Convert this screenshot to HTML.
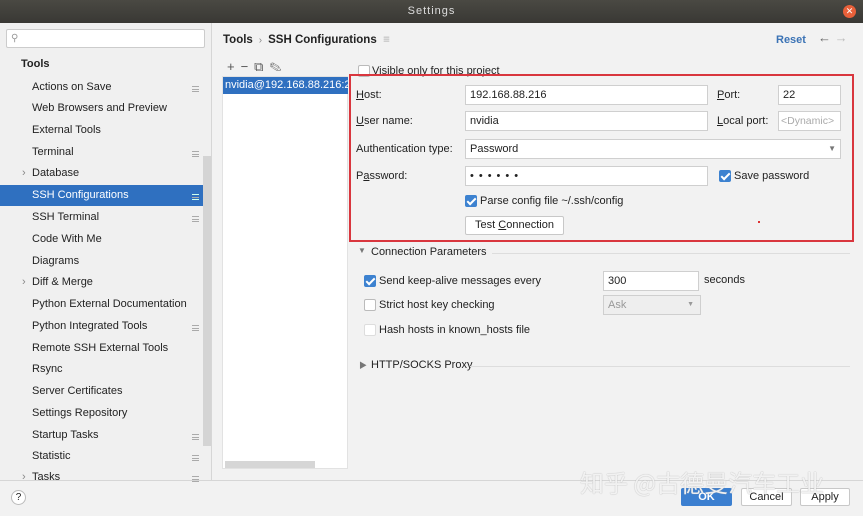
<!DOCTYPE html>
<html><head><style>
*{margin:0;padding:0;box-sizing:border-box}
body{width:863px;height:516px;overflow:hidden;background:#f2f2f2;font-family:"Liberation Sans","Noto Sans CJK SC",sans-serif;font-size:11px;color:#222;position:relative}
.a{position:absolute;white-space:nowrap}
.title{left:0;top:0;width:863px;height:23px;background:linear-gradient(#4a4943,#393834);color:#ddd;text-align:center;line-height:23px;font-size:11px;letter-spacing:1px}
.side{left:0;top:23px;width:212px;height:457px;background:#f0f0f0;border-right:1px solid #d6d6d6}
.it{position:absolute;left:32px;font-size:11px;color:#222}
.mk{position:absolute;left:192px;width:7px;height:6px;border-top:1px solid #aaa;border-bottom:1px solid #aaa}
.mk:after{content:"";position:absolute;left:0;top:2px;width:7px;height:1px;background:#aaa}
.inp{position:absolute;background:#fff;border:1px solid #cfcfcf;height:20px;line-height:18px;padding-left:4px;font-size:11px}
.lbl{position:absolute;font-size:11px}
.cb{position:absolute;width:12px;height:12px;border:1px solid #bbb;background:#fff;border-radius:2px}
.cb.on{background:#3d82d0;border-color:#3d82d0}
.cb.on:after{content:"";position:absolute;left:3px;top:0px;width:3px;height:7px;border:solid #fff;border-width:0 2px 2px 0;transform:rotate(45deg)}
.btn{position:absolute;background:#fff;border:1px solid #c8c8c8;border-radius:2px;text-align:center;font-size:11px}
</style></head><body>
<div class="a title">Settings</div>
<div class="a" style="left:843px;top:5px;width:13px;height:13px;border-radius:50%;background:#e8603a;color:#fff;font-size:9px;line-height:13px;text-align:center">✕</div>
<div class="a side">
 <div class="a" style="left:6px;top:6px;width:199px;height:19px;background:#fff;border:1px solid #ccc;border-radius:2px;color:#999;font-size:10px;padding-left:4px;line-height:17px">⚲</div>
 <div class="it" style="left:21px;top:35px;font-weight:bold">Tools</div>
 <div class="it" style="top:58px">Actions on Save</div><div class="mk" style="top:63px"></div>
 <div class="it" style="top:79px">Web Browsers and Preview</div>
 <div class="it" style="top:101px">External Tools</div>
 <div class="it" style="top:123px">Terminal</div><div class="mk" style="top:128px"></div>
 <div class="it" style="left:22px;top:144px;color:#888">›</div><div class="it" style="top:144px">Database</div>
 <div class="a" style="left:0;top:162px;width:211px;height:21px;background:#2f70c0"></div>
 <div class="it" style="top:166px;color:#fff">SSH Configurations</div><div class="mk" style="top:171px;border-color:#cfe;"></div>
 <div class="it" style="top:188px">SSH Terminal</div><div class="mk" style="top:193px"></div>
 <div class="it" style="top:210px">Code With Me</div>
 <div class="it" style="top:232px">Diagrams</div>
 <div class="it" style="left:22px;top:253px;color:#888">›</div><div class="it" style="top:253px">Diff &amp; Merge</div>
 <div class="it" style="top:275px">Python External Documentation</div>
 <div class="it" style="top:297px">Python Integrated Tools</div><div class="mk" style="top:302px"></div>
 <div class="it" style="top:319px">Remote SSH External Tools</div>
 <div class="it" style="top:340px">Rsync</div>
 <div class="it" style="top:362px">Server Certificates</div>
 <div class="it" style="top:384px">Settings Repository</div>
 <div class="it" style="top:406px">Startup Tasks</div><div class="mk" style="top:411px"></div>
 <div class="it" style="top:427px">Statistic</div><div class="mk" style="top:432px"></div>
 <div class="it" style="left:22px;top:448px;color:#888">›</div><div class="it" style="top:448px">Tasks</div><div class="mk" style="top:453px"></div>
 <div class="a" style="left:203px;top:133px;width:8px;height:290px;background:#d4d4d4"></div>
</div>
<div class="a" style="left:223px;top:34px;font-weight:bold;font-size:11.5px">Tools <span style="color:#888;font-weight:normal;font-size:10px">&nbsp;›&nbsp;</span> SSH Configurations <span style="color:#aaa;font-weight:normal">&nbsp;≡</span></div>
<div class="a" style="left:776px;top:34px;color:#3b73b5;font-weight:bold">Reset</div>
<div class="a" style="left:818px;top:30px;color:#666;font-size:13px">← <span style="color:#bbb">→</span></div>
<div class="a" style="left:227px;top:59px;color:#555;font-size:13px;letter-spacing:6px">+−⧉✎</div>
<div class="a" style="left:222px;top:76px;width:126px;height:393px;background:#fff;border:1px solid #e2e2e2"></div>
<div class="a" style="left:223px;top:77px;width:125px;height:17px;background:#2f70c0;color:#fff;font-size:11px;line-height:17px;padding-left:2px;overflow:hidden">nvidia@192.168.88.216:22</div>
<div class="a" style="left:225px;top:461px;width:90px;height:7px;background:#d6d6d6"></div>
<div class="cb" style="left:358px;top:65px"></div>
<div class="lbl" style="left:372px;top:65px">Visible only for this project</div>
<div class="a" style="left:349px;top:74px;width:505px;height:168px;border:2px solid #d9363e"></div>
<div class="lbl" style="left:356px;top:89px"><u>H</u>ost:</div>
<div class="inp" style="left:465px;top:85px;width:243px">192.168.88.216</div>
<div class="lbl" style="left:717px;top:89px"><u>P</u>ort:</div>
<div class="inp" style="left:778px;top:85px;width:63px">22</div>
<div class="lbl" style="left:356px;top:115px"><u>U</u>ser name:</div>
<div class="inp" style="left:465px;top:111px;width:243px">nvidia</div>
<div class="lbl" style="left:717px;top:115px"><u>L</u>ocal port:</div>
<div class="inp" style="left:778px;top:111px;width:63px;color:#aaa;font-size:10.5px;padding-left:2px">&lt;Dynamic&gt;</div>
<div class="lbl" style="left:356px;top:143px">Authentication type:</div>
<div class="inp" style="left:465px;top:139px;width:376px">Password<span style="position:absolute;right:4px;color:#777;font-size:8px">▼</span></div>
<div class="lbl" style="left:356px;top:170px">P<u>a</u>ssword:</div>
<div class="inp" style="left:465px;top:166px;width:243px;letter-spacing:5px">••••••</div>
<div class="cb on" style="left:719px;top:170px"></div>
<div class="lbl" style="left:734px;top:170px">Save password</div>
<div class="cb on" style="left:465px;top:195px"></div>
<div class="lbl" style="left:480px;top:195px">Parse config file ~/.ssh/config</div>
<div class="btn" style="left:465px;top:216px;width:99px;height:19px;line-height:17px">Test <u>C</u>onnection</div>
<div class="a" style="left:758px;top:221px;width:2px;height:2px;background:#d33"></div>
<div class="lbl" style="left:358px;top:246px;font-size:8px;color:#777">▼</div>
<div class="lbl" style="left:371px;top:246px">Connection Parameters</div>
<div class="a" style="left:492px;top:253px;width:358px;height:1px;background:#ddd"></div>
<div class="cb on" style="left:364px;top:275px"></div>
<div class="lbl" style="left:379px;top:275px">Send keep-alive messages every</div>
<div class="inp" style="left:603px;top:271px;width:96px">300</div>
<div class="lbl" style="left:704px;top:274px">seconds</div>
<div class="cb" style="left:364px;top:299px"></div>
<div class="lbl" style="left:379px;top:299px">Strict host key checking</div>
<div class="inp" style="left:603px;top:295px;width:98px;background:#eee;color:#999">Ask<span style="position:absolute;right:6px;font-size:7px">▼</span></div>
<div class="cb" style="left:364px;top:324px;border-color:#ddd"></div>
<div class="lbl" style="left:379px;top:324px">Hash hosts in known_hosts file</div>
<div class="lbl" style="left:359px;top:360px;font-size:8px;color:#777">▶</div>
<div class="lbl" style="left:371px;top:359px">HTTP/SOCKS Proxy</div>
<div class="a" style="left:470px;top:366px;width:380px;height:1px;background:#ddd"></div>
<div class="a" style="left:0;top:480px;width:863px;height:1px;background:#d6d6d6"></div>
<div class="a" style="left:11px;top:490px;width:15px;height:15px;border:1px solid #bbb;border-radius:50%;background:#fff;text-align:center;font-size:10px;line-height:13px">?</div>
<div class="btn" style="left:681px;top:488px;width:51px;height:18px;background:#3b7fd0;border-color:#3b7fd0;color:#fff;font-weight:bold;line-height:16px">OK</div>
<div class="btn" style="left:741px;top:488px;width:51px;height:18px;line-height:16px">Cancel</div>
<div class="btn" style="left:800px;top:488px;width:50px;height:18px;line-height:16px">Apply</div>
<div class="a" style="left:580px;top:464px;font-size:24px;color:rgba(255,255,255,0.85);text-shadow:0 0 1px #999;font-family:'Noto Sans CJK SC',sans-serif">知乎 @古德曼汽车工业</div>
</body></html>
